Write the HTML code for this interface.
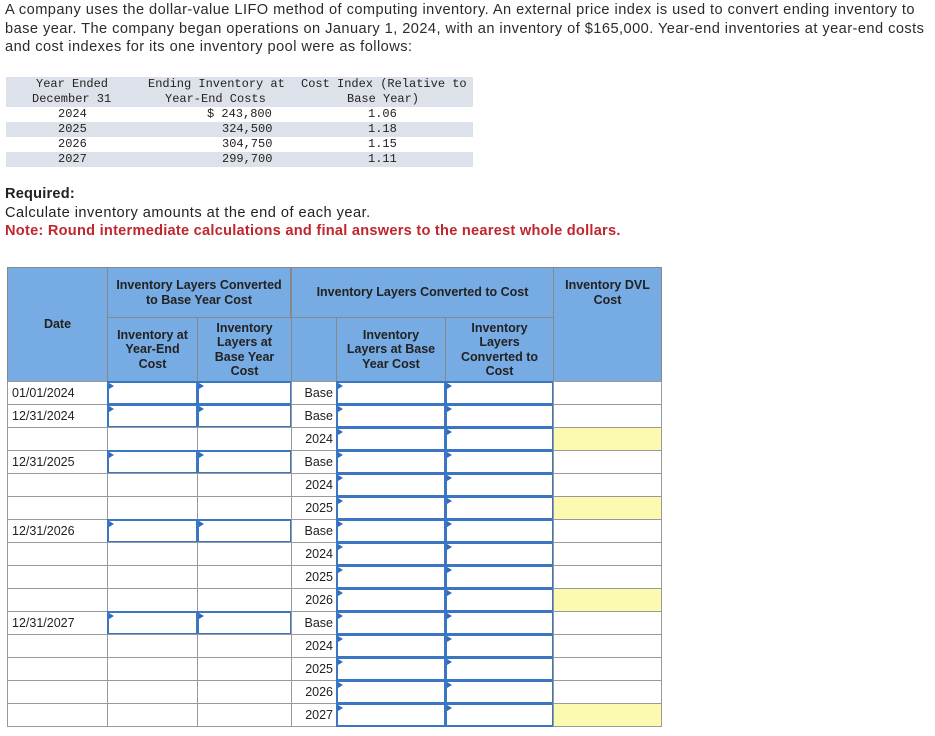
<!DOCTYPE html>
<html><head><style>
body{margin:0;width:935px;height:736px;background:#fff;font-family:"Liberation Sans",Arial,sans-serif;color:#222;position:relative;overflow:hidden}
.p{position:absolute;left:5px;top:1px;width:929px;font-size:14.6px;letter-spacing:0.45px;line-height:18.5px;color:#2b2b2b}
.t{position:absolute;left:6px;top:77px;width:467px;font-family:"Liberation Mono",monospace;font-size:12px;line-height:15px}
.t div{height:15px;position:relative}
.t span{position:absolute;top:0}
.g{background:#dde1ea}
.a{position:absolute;font-size:14.6px;letter-spacing:0.35px}
.h{position:absolute;background:#76abe3;border:1px solid #888;box-sizing:border-box;font-weight:bold;font-size:12.5px;line-height:14.5px;text-align:center;display:flex;align-items:center;justify-content:center;color:#222}
.c{position:absolute;border:1px solid #999;box-sizing:border-box;background:#fff;font-size:12.5px}
.i{position:absolute;border:2px solid #3b76c2;box-sizing:border-box;background:#fff}
.i::before{content:"";position:absolute;left:0;top:0;border-left:5px solid #2d6cc0;border-top:3px solid transparent;border-bottom:3px solid transparent}
</style></head><body>
<div class="p">A company uses the dollar-value LIFO method of computing inventory. An external price index is used to convert ending inventory to base year. The company began operations on January 1, 2024, with an inventory of $165,000. Year-end inventories at year-end costs and cost indexes for its one inventory pool were as follows:</div>
<div class="t">
<div class="g"><span style="left:30px">Year Ended</span><span style="left:142px">Ending Inventory at</span><span style="left:295px">Cost Index (Relative to</span></div>
<div class="g"><span style="left:26px">December 31</span><span style="left:159px">Year-End Costs</span><span style="left:341px">Base Year)</span></div>
<div><span style="left:52px">2024</span><span style="left:201px">$ 243,800</span><span style="left:362px">1.06</span></div>
<div class="g"><span style="left:52px">2025</span><span style="left:216px">324,500</span><span style="left:362px">1.18</span></div>
<div><span style="left:52px">2026</span><span style="left:216px">304,750</span><span style="left:362px">1.15</span></div>
<div class="g"><span style="left:52px">2027</span><span style="left:216px">299,700</span><span style="left:362px">1.11</span></div>
</div>
<div class="a" style="left:5px;top:186px;font-weight:bold;letter-spacing:0.2px">Required:</div>
<div class="a" style="left:5px;top:205px;letter-spacing:0.48px">Calculate inventory amounts at the end of each year.</div>
<div class="a" style="left:5px;top:223px;font-weight:bold;color:#c0262d;letter-spacing:0.25px">Note: Round intermediate calculations and final answers to the nearest whole dollars.</div>

<div class="h" style="left:7px;top:267px;width:101px;height:115px">Date</div>
<div class="h" style="left:107px;top:267px;width:184px;height:51px;border-bottom:1.5px solid #222">Inventory Layers Converted<br>to Base Year Cost</div>
<div class="h" style="left:107px;top:317px;width:91px;height:65px">Inventory at<br>Year-End<br>Cost</div>
<div class="h" style="left:197px;top:317px;width:95px;height:65px">Inventory<br>Layers at<br>Base Year<br>Cost</div>
<div class="h" style="left:291px;top:267px;width:263px;height:51px;border-bottom:1.5px solid #222">Inventory Layers Converted to Cost</div>
<div class="h" style="left:291px;top:317px;width:46px;height:65px"></div>
<div class="h" style="left:336px;top:317px;width:110px;height:65px">Inventory<br>Layers at Base<br>Year Cost</div>
<div class="h" style="left:445px;top:317px;width:109px;height:65px">Inventory<br>Layers<br>Converted to<br>Cost</div>
<div class="h" style="left:553px;top:267px;width:109px;height:115px;align-items:flex-start;padding-top:10px">Inventory DVL<br>Cost</div>

<div id="rows"></div>
<script>
var d=["01/01/2024","12/31/2024","","12/31/2025","","","12/31/2026","","","","12/31/2027","","","",""];
var l=["Base","Base","2024","Base","2024","2025","Base","2024","2025","2026","Base","2024","2025","2026","2027"];
var y=[2,5,9,14],h="";
for(var r=0;r<15;r++){var t=381+r*23;
h+='<div class="c" style="left:7px;top:'+t+'px;width:101px;height:24px;padding:4px 0 0 4px">'+d[r]+'</div>';
if(d[r]){h+='<div class="i" style="left:107px;top:'+t+'px;width:91px;height:24px"></div><div class="i" style="left:197px;top:'+t+'px;width:95px;height:24px"></div>';}
else{h+='<div class="c" style="left:107px;top:'+t+'px;width:91px;height:24px"></div><div class="c" style="left:197px;top:'+t+'px;width:95px;height:24px"></div>';}
h+='<div class="c" style="left:291px;top:'+t+'px;width:46px;height:24px;text-align:right;padding:4px 3px 0 0">'+l[r]+'</div>';
h+='<div class="i" style="left:336px;top:'+t+'px;width:110px;height:24px"></div><div class="i" style="left:445px;top:'+t+'px;width:109px;height:24px"></div>';
h+='<div class="c" style="left:553px;top:'+t+'px;width:109px;height:24px;background:'+(y.indexOf(r)>=0?'#fcf9b0':'#fff')+'"></div>';}
document.getElementById("rows").innerHTML=h;
</script>
</body></html>
